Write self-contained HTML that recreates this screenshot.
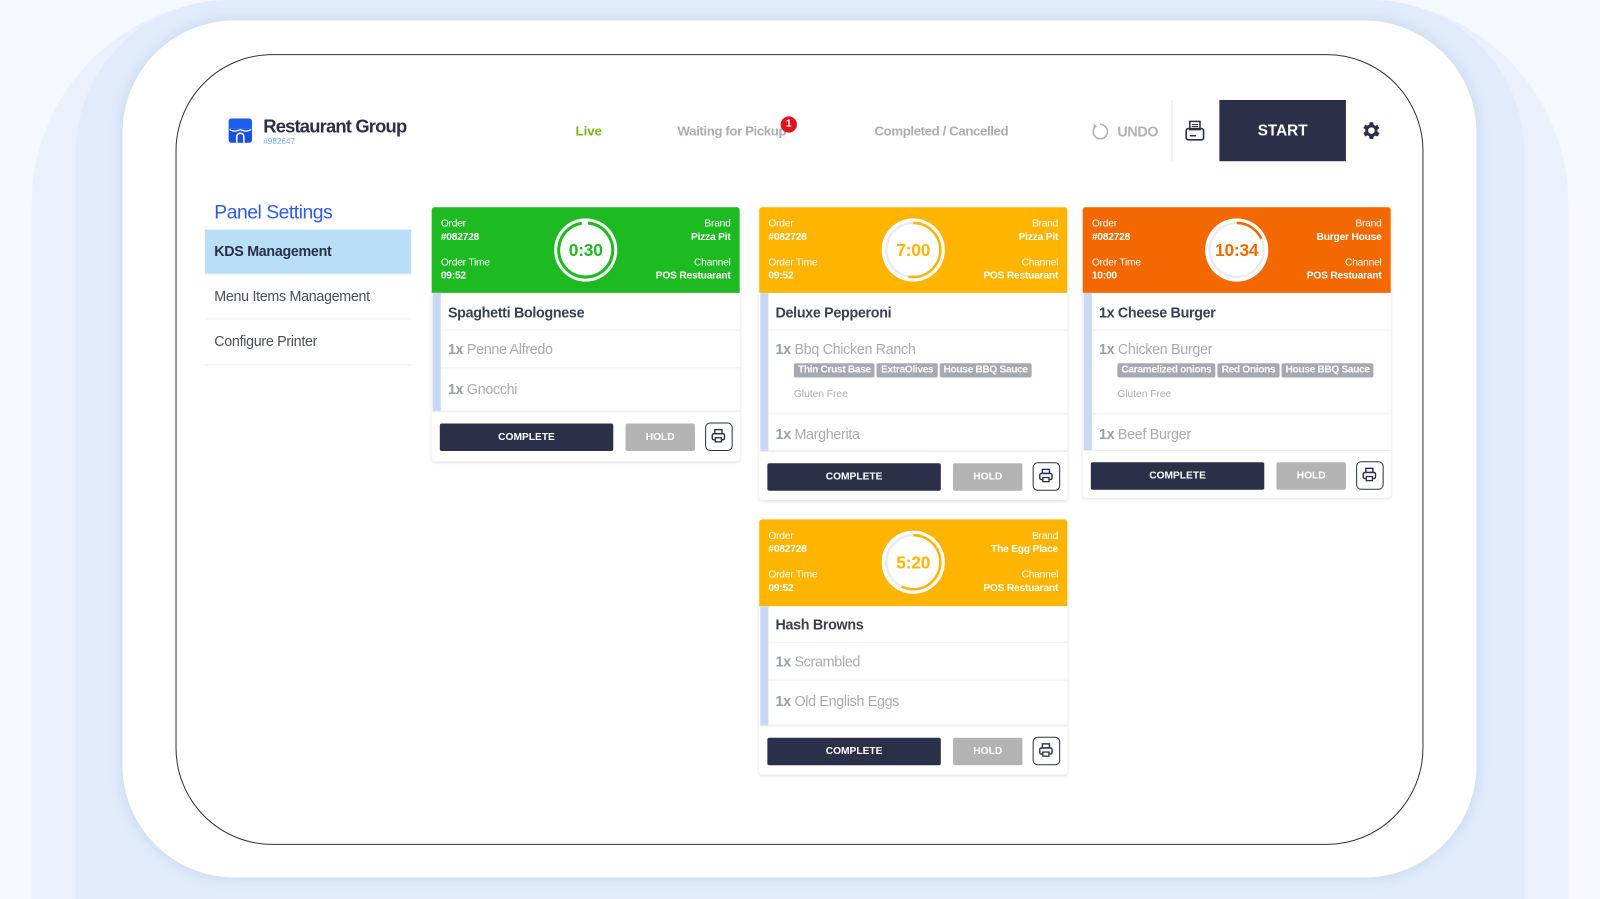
<!DOCTYPE html>
<html><head><meta charset="utf-8"><style>
*{margin:0;padding:0;box-sizing:border-box}
html,body{width:1600px;height:899px;overflow:hidden;background:#f5f8fe}
body{font-family:"Liberation Sans",sans-serif}
#clip{position:absolute;left:0;top:0;width:1600px;height:899px;overflow:hidden}
#s{position:absolute;left:0;top:0;width:1568px;height:881px;transform:scale(1.0204);transform-origin:0 0;overflow:hidden}
.a{position:absolute}
.card{position:absolute;width:302px;background:#fff;box-shadow:0 1px 3px rgba(0,0,0,.12);border-radius:3px;overflow:hidden}
.hd{position:absolute;left:0;top:0;width:302px;height:84px;color:#fff;font-size:10px;letter-spacing:-.2px}
.hd .l{position:absolute;left:9px;line-height:13px}
.hd .r{position:absolute;right:9px;text-align:right;line-height:13px}
.hd b{font-weight:bold}
.hd svg{position:absolute;left:120px;top:11px}
.stripe{position:absolute;left:1px;width:8px;background:#c8daf3}
.row{position:absolute;left:9px;right:0;border-bottom:1px solid #f0f1f4;padding-left:7px;font-size:14px;color:#a7abb5;letter-spacing:-.3px}
.row b{color:#9a9ea8}
.ttl{color:#3b4050;font-weight:bold;font-size:14px}
.tags{position:absolute;left:34px;font-size:10px;white-space:nowrap;letter-spacing:-.35px}
.tags span{display:inline-block;background:#a5a9b3;color:#fff;font-weight:bold;padding:1px 4px;border-radius:2px;margin-right:2px;line-height:12px}
.gf{position:absolute;left:34px;font-size:10px;color:#a7abb5}
.ft{position:absolute;left:0;width:302px;height:49px;border-top:1px solid #eceef2}
.cb{position:absolute;left:8px;top:11px;width:170px;height:27px;background:#2a3047;color:#fff;font-size:10px;font-weight:bold;text-align:center;line-height:27px;border-radius:2px}
.hb{position:absolute;left:190px;top:11px;width:68px;height:27px;background:#b3b3b3;color:#fff;font-size:10px;font-weight:bold;text-align:center;line-height:27px;border-radius:2px}
.pb{position:absolute;left:268px;top:10px;width:27px;height:28px;border:1.5px solid #2a3047;border-radius:5px}
.pb svg{position:absolute;left:5px;top:5px}
.side{position:absolute;left:201px;width:202px;font-size:14px;color:#4a4f5c;padding-left:9px;border-bottom:1px solid #eceef2;letter-spacing:-.3px}
</style></head><body><div id="clip"><div id="s">
<div class="a" style="left:31px;top:0;width:1506px;height:881px;border-radius:200px 200px 0 0;background:#eaf1fd"></div>
<div class="a" style="left:74px;top:0;width:1420px;height:881px;border-radius:150px 150px 0 0;background:#e1ebfb"></div>
<div class="a" style="left:120px;top:20px;width:1327px;height:840px;border-radius:110px;background:#fff;box-shadow:0 0 12px rgba(120,150,200,.25)"></div>
<div class="a" style="left:172px;top:53px;width:1223px;height:775px;border-radius:95px;border:1.5px solid #333"></div>

<svg class="a" style="left:224px;top:116px" width="23" height="24" viewBox="0 0 23 24"><path d="M3 0h17a3 3 0 0 1 3 3v7H0V3a3 3 0 0 1 3-3z" fill="#1f5cf0"/><path d="M0 10h23v11a3 3 0 0 1-3 3H3a3 3 0 0 1-3-3z" fill="#1a4fe0"/><path d="M1 11q5 3 10.5 0q5.5 3 10.5 0" stroke="#fff" stroke-width="1.3" fill="none"/><path d="M8 24v-6a3.5 3.5 0 0 1 7 0v6" stroke="#fff" stroke-width="1.5" fill="none"/></svg>
<div class="a" style="left:258px;top:114px;font-size:18px;font-weight:bold;color:#2a3047;letter-spacing:-.8px">Restaurant Group</div>
<div class="a" style="left:258px;top:134px;font-size:8px;color:#7ab0f2">#982647</div>
<div class="a" style="left:564px;top:121px;font-size:13px;font-weight:bold;color:#7cb518">Live</div>
<div class="a" style="left:664px;top:121px;font-size:13px;font-weight:bold;color:#a9adb5;letter-spacing:-.4px">Waiting for Pickup</div>
<div class="a" style="left:765px;top:114px;width:16px;height:16px;border-radius:50%;background:#e0141c;color:#fff;font-size:10px;font-weight:bold;text-align:center;line-height:16px">1</div>
<div class="a" style="left:857px;top:121px;font-size:13px;font-weight:bold;color:#a9adb5;letter-spacing:-.4px">Completed / Cancelled</div>
<svg class="a" style="left:1068px;top:119px" width="20" height="20" viewBox="0 0 20 20"><path d="M6 4.5A7 7 0 1 0 10 3" stroke="#b0b3ba" stroke-width="1.6" fill="none"/><path d="M4 2l3 3-3.5 1.5z" fill="#b0b3ba"/></svg>
<div class="a" style="left:1095px;top:121px;font-size:14px;font-weight:bold;color:#b0b3ba;letter-spacing:-.3px">UNDO</div>
<div class="a" style="left:1148px;top:98px;width:1px;height:60px;background:#e3e5e9"></div>
<svg class="a" style="left:1161px;top:118px" width="21" height="21" viewBox="0 0 21 21"><rect x="5" y="1" width="10" height="8" fill="none" stroke="#2a3047" stroke-width="1.5"/><path d="M7 4h6M7 6h6" stroke="#2a3047"/><rect x="1.5" y="8" width="17" height="11" rx="2" fill="none" stroke="#2a3047" stroke-width="1.6"/><path d="M5 15h6" stroke="#2a3047" stroke-width="1.5"/></svg>
<div class="a" style="left:1195px;top:98px;width:124px;height:60px;background:#2a3047;color:#fff;font-size:15px;font-weight:bold;text-align:center;line-height:62px">START</div>
<svg class="a" style="left:1333px;top:117px" width="22" height="22" viewBox="0 0 24 24"><path fill="#2a3047" d="M19.4 13a7.5 7.5 0 0 0 0-2l2.1-1.6-2-3.5-2.5 1a7.6 7.6 0 0 0-1.7-1L15 3h-4l-.4 2.7a7.6 7.6 0 0 0-1.7 1l-2.5-1-2 3.5L6.5 11a7.5 7.5 0 0 0 0 2l-2.1 1.6 2 3.5 2.5-1a7.6 7.6 0 0 0 1.7 1L11 21h4l.4-2.7a7.6 7.6 0 0 0 1.7-1l2.5 1 2-3.5zM13 15.5a3.5 3.5 0 1 1 0-7 3.5 3.5 0 0 1 0 7z" transform="translate(-1 0)"/></svg>

<div class="a" style="left:210px;top:198px;font-size:19px;color:#2f5bea;letter-spacing:-.5px">Panel Settings</div>
<div class="side" style="top:225px;height:44px;line-height:43px;background:#b9dff8;font-weight:bold;color:#2a3047">KDS Management</div>
<div class="side" style="top:269px;height:44px;line-height:43px">Menu Items Management</div>
<div class="side" style="top:313px;height:45px;line-height:43px">Configure Printer</div>

<!-- card 1 -->
<div class="card" style="left:423px;top:203px;height:249px">
 <div class="hd" style="background:#1dba22">
  <div class="l" style="top:10px">Order<br><b>#082728</b></div>
  <div class="l" style="top:48px">Order Time<br><b>09:52</b></div>
  <div class="r" style="top:10px">Brand<br><b>Pizza Pit</b></div>
  <div class="r" style="top:48px">Channel<br><b>POS Restuarant</b></div>
  <svg width="62" height="62" viewBox="0 0 62 62"><circle cx="31" cy="31" r="31" fill="#fff"/><circle cx="31" cy="31" r="26.5" fill="none" stroke="#1dba22" stroke-width="3" stroke-dasharray="160 20" transform="rotate(-85 31 31)"/><text x="31" y="37" text-anchor="middle" font-family="Liberation Sans" font-weight="bold" font-size="17" fill="#1dba22">0:30</text></svg>
 </div>
 <div class="stripe" style="top:84px;height:116px"></div>
 <div class="row ttl" style="top:84px;height:37px;line-height:38px">Spaghetti Bolognese</div>
 <div class="row" style="top:121px;height:37px;line-height:36px"><b>1x</b> Penne Alfredo</div>
 <div class="row" style="top:158px;height:42px;line-height:40px"><b>1x</b> Gnocchi</div>
 <div class="ft" style="top:200px"><div class="cb">COMPLETE</div><div class="hb">HOLD</div><div class="pb"><svg width="14" height="14" viewBox="0 0 14 14"><rect x="3.5" y="1" width="7" height="4" fill="none" stroke="#2a3047" stroke-width="1.4"/><rect x="1" y="5" width="12" height="6" rx="1.5" fill="none" stroke="#2a3047" stroke-width="1.4"/><rect x="4" y="9" width="6" height="4" fill="#fff" stroke="#2a3047" stroke-width="1.3"/></svg></div></div>
</div>

<!-- card 2 -->
<div class="card" style="left:744px;top:203px;height:287px">
 <div class="hd" style="background:#ffb400">
  <div class="l" style="top:10px">Order<br><b>#082728</b></div>
  <div class="l" style="top:48px">Order Time<br><b>09:52</b></div>
  <div class="r" style="top:10px">Brand<br><b>Pizza Pit</b></div>
  <div class="r" style="top:48px">Channel<br><b>POS Restuarant</b></div>
  <svg width="62" height="62" viewBox="0 0 62 62"><circle cx="31" cy="31" r="31" fill="#fff"/><circle cx="31" cy="31" r="26.5" fill="none" stroke="#ececec" stroke-width="2.5"/><circle cx="31" cy="31" r="26.5" fill="none" stroke="#ffb400" stroke-width="2.5" stroke-dasharray="88 200" transform="rotate(-90 31 31)"/><text x="31" y="37" text-anchor="middle" font-family="Liberation Sans" font-weight="bold" font-size="17" fill="#ffb400">7:00</text></svg>
 </div>
 <div class="stripe" style="top:84px;height:155px"></div>
 <div class="row ttl" style="top:84px;height:37px;line-height:38px">Deluxe Pepperoni</div>
 <div class="row" style="top:121px;height:82px;line-height:36px"><b>1x</b> Bbq Chicken Ranch</div>
 <div class="tags" style="top:153px"><span>Thin Crust Base</span><span>ExtraOlives</span><span>House BBQ Sauce</span></div>
 <div class="gf" style="top:178px">Gluten Free</div>
 <div class="row" style="top:203px;height:36px;line-height:38px"><b>1x</b> Margherita</div>
 <div class="ft" style="top:239px"><div class="cb">COMPLETE</div><div class="hb">HOLD</div><div class="pb"><svg width="14" height="14" viewBox="0 0 14 14"><rect x="3.5" y="1" width="7" height="4" fill="none" stroke="#2a3047" stroke-width="1.4"/><rect x="1" y="5" width="12" height="6" rx="1.5" fill="none" stroke="#2a3047" stroke-width="1.4"/><rect x="4" y="9" width="6" height="4" fill="#fff" stroke="#2a3047" stroke-width="1.3"/></svg></div></div>
</div>

<!-- card 3 -->
<div class="card" style="left:1061px;top:203px;height:285px">
 <div class="hd" style="background:#f46800">
  <div class="l" style="top:10px">Order<br><b>#082728</b></div>
  <div class="l" style="top:48px">Order Time<br><b>10:00</b></div>
  <div class="r" style="top:10px">Brand<br><b>Burger House</b></div>
  <div class="r" style="top:48px">Channel<br><b>POS Restuarant</b></div>
  <svg width="62" height="62" viewBox="0 0 62 62"><circle cx="31" cy="31" r="31" fill="#fff"/><circle cx="31" cy="31" r="26.5" fill="none" stroke="#ececec" stroke-width="2.5"/><circle cx="31" cy="31" r="26.5" fill="none" stroke="#f46800" stroke-width="2.5" stroke-dasharray="30 200" transform="rotate(-90 31 31)"/><text x="31" y="37" text-anchor="middle" font-family="Liberation Sans" font-weight="bold" font-size="17" fill="#f46800">10:34</text></svg>
 </div>
 <div class="stripe" style="top:84px;height:155px"></div>
 <div class="row ttl" style="top:84px;height:37px;line-height:38px">1x Cheese Burger</div>
 <div class="row" style="top:121px;height:82px;line-height:36px"><b>1x</b> Chicken Burger</div>
 <div class="tags" style="top:153px"><span>Caramelized onions</span><span>Red Onions</span><span>House BBQ Sauce</span></div>
 <div class="gf" style="top:178px">Gluten Free</div>
 <div class="row" style="top:203px;height:36px;line-height:38px"><b>1x</b> Beef Burger</div>
 <div class="ft" style="top:238px"><div class="cb">COMPLETE</div><div class="hb">HOLD</div><div class="pb"><svg width="14" height="14" viewBox="0 0 14 14"><rect x="3.5" y="1" width="7" height="4" fill="none" stroke="#2a3047" stroke-width="1.4"/><rect x="1" y="5" width="12" height="6" rx="1.5" fill="none" stroke="#2a3047" stroke-width="1.4"/><rect x="4" y="9" width="6" height="4" fill="#fff" stroke="#2a3047" stroke-width="1.3"/></svg></div></div>
</div>

<!-- card 4 -->
<div class="card" style="left:744px;top:509px;height:250px">
 <div class="hd" style="background:#ffb400;height:85px">
  <div class="l" style="top:10px">Order<br><b>#082728</b></div>
  <div class="l" style="top:48px">Order Time<br><b>09:52</b></div>
  <div class="r" style="top:10px">Brand<br><b>The Egg Place</b></div>
  <div class="r" style="top:48px">Channel<br><b>POS Restuarant</b></div>
  <svg width="62" height="62" viewBox="0 0 62 62"><circle cx="31" cy="31" r="31" fill="#fff"/><circle cx="31" cy="31" r="26.5" fill="none" stroke="#ececec" stroke-width="2.5"/><circle cx="31" cy="31" r="26.5" fill="none" stroke="#ffb400" stroke-width="2.5" stroke-dasharray="95 200" transform="rotate(-90 31 31)"/><text x="31" y="37" text-anchor="middle" font-family="Liberation Sans" font-weight="bold" font-size="17" fill="#ffb400">5:20</text></svg>
 </div>
 <div class="stripe" style="top:85px;height:117px"></div>
 <div class="row ttl" style="top:85px;height:36px;line-height:37px">Hash Browns</div>
 <div class="row" style="top:121px;height:37px;line-height:36px"><b>1x</b> Scrambled</div>
 <div class="row" style="top:158px;height:44px;line-height:40px"><b>1x</b> Old English Eggs</div>
 <div class="ft" style="top:202px"><div class="cb">COMPLETE</div><div class="hb">HOLD</div><div class="pb"><svg width="14" height="14" viewBox="0 0 14 14"><rect x="3.5" y="1" width="7" height="4" fill="none" stroke="#2a3047" stroke-width="1.4"/><rect x="1" y="5" width="12" height="6" rx="1.5" fill="none" stroke="#2a3047" stroke-width="1.4"/><rect x="4" y="9" width="6" height="4" fill="#fff" stroke="#2a3047" stroke-width="1.3"/></svg></div></div>
</div>
</div></div></body></html>
